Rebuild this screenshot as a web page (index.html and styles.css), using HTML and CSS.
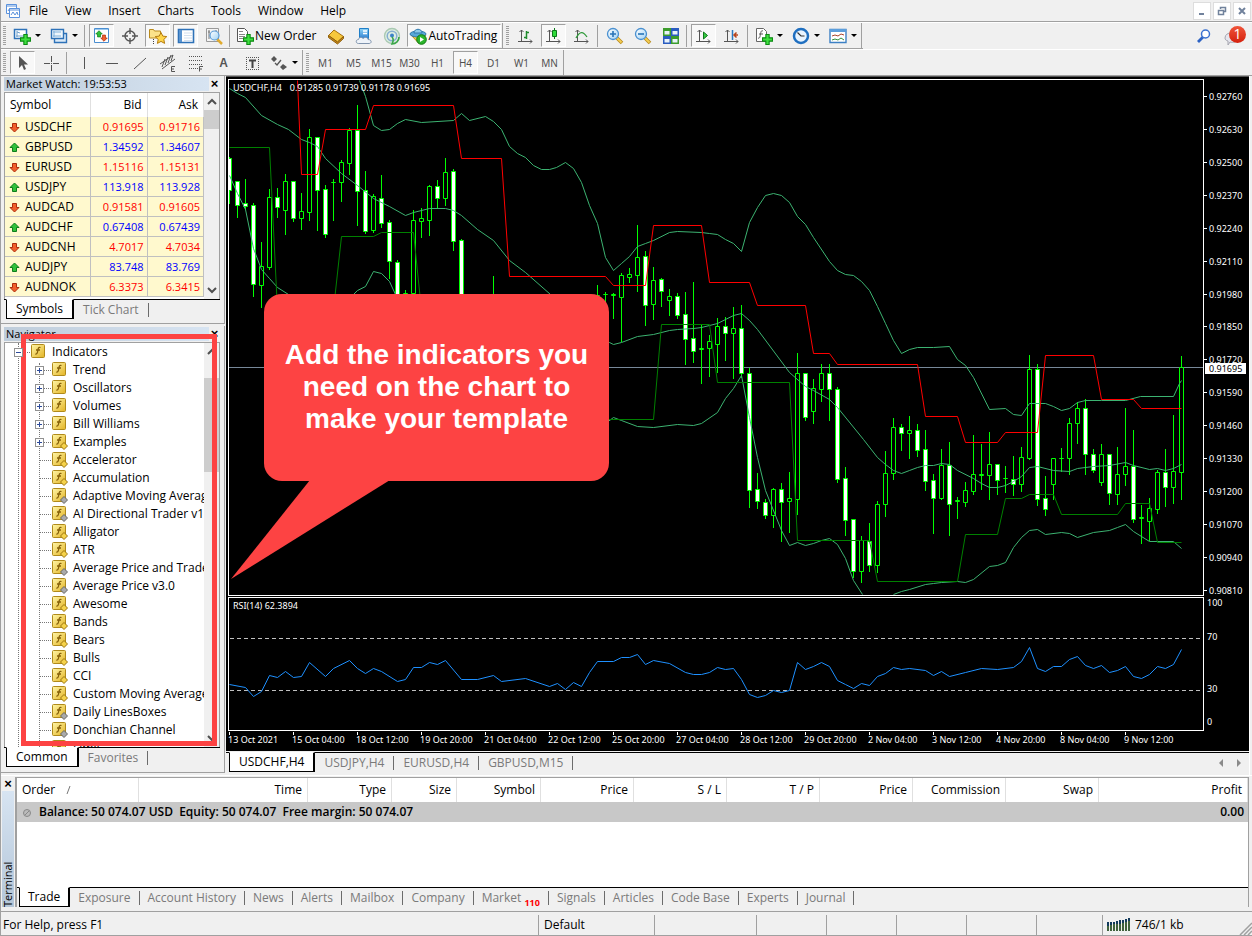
FILE: index.html
```html
<!DOCTYPE html>
<html lang="en">
<head>
<meta charset="utf-8">
<title>USDCHF,H4</title>
<link rel="stylesheet" href="styles.css">
</head>
<body>
<svg class="defs" aria-hidden="true">
  <defs>
    <linearGradient id="gold" x1="0" y1="0" x2="1" y2="1"><stop offset="0" stop-color="#fff6a8"/><stop offset="1" stop-color="#e3b324"/></linearGradient>
    <linearGradient id="blue" x1="0" y1="0" x2="0" y2="1"><stop offset="0" stop-color="#8fd4f7"/><stop offset="1" stop-color="#2f7fd0"/></linearGradient>
    <linearGradient id="lens" x1="0" y1="0" x2="1" y2="1"><stop offset="0" stop-color="#ffffff"/><stop offset="1" stop-color="#9fd2f5"/></linearGradient>
    <linearGradient id="badge" x1="0" y1="0" x2="0" y2="1"><stop offset="0" stop-color="#f0553a"/><stop offset="1" stop-color="#d4200c"/></linearGradient>
  </defs>
  <symbol id="plus" viewBox="0 0 10 10"><path d="M3.5.5h3v3h3v3h-3v3h-3v-3h-3v-3h3z" fill="#3fe03f" stroke="#0c8a14"/></symbol>
  <symbol id="up" viewBox="0 0 11 11"><path d="M5.5 1l4.500 4.500h-2.500v4h-4v-4H1z" fill="#30c23c" stroke="#0e7d1c"/></symbol>
  <symbol id="down" viewBox="0 0 11 11"><path d="M5.500 10L1 5.500h2.500v-4h4v4H10z" fill="#f2602c" stroke="#ad2c0c"/></symbol>
  <symbol id="axes" viewBox="0 0 18 18"><path d="M4.500 3v12M1 14.500h14M2.500 5l2-2 2 2M13 12.500l2 2-2 2" fill="none" stroke="#555"/></symbol>
  <symbol id="glass" viewBox="0 0 18 18"><path d="M11 11l5 5" stroke="#b88a1c" stroke-width="3.500"/><path d="M11 11l4.500 4.500" stroke="#f5cf55" stroke-width="1.800"/><circle cx="7" cy="7" r="5.500" fill="url(#lens)" stroke="#4a90d0" stroke-width="1.300"/></symbol>
  <symbol id="fn" viewBox="0 0 16 16"><rect x=".5" y=".5" width="13" height="13" rx="1" fill="url(#gold)" stroke="#b08a1a"/><path d="M9.500 3.500c-2-.8-2.300.7-2.600 2.500-.3 2-.6 4.600-2.600 4M5 6h4" fill="none" stroke="#86600a" stroke-width="1.300"/></symbol>
</svg>

<div class="app">
  <header class="menubar">
    <svg class="logo" viewBox="0 0 16 16"><g fill="#fff" stroke="#5b92dc"><path d="M1.500 1.500h10v9h-10z"/><path d="M1.500 3h10M3 8l2-3 2 3"/><path d="M4.500 5.500h10v9h-10z"/><path d="M4.500 7h10M6 12l2-3 2 3 2-3 1 3" fill="none"/></g></svg>
    <nav class="menu">
      <button>File</button><button>View</button><button>Insert</button><button>Charts</button><button>Tools</button><button>Window</button><button>Help</button>
    </nav>
    <div class="winctl">
      <button aria-label="Minimize"><svg viewBox="0 0 10 10"><path d="M2 8h5" stroke="#71829c" stroke-width="2"/></svg></button>
      <button aria-label="Restore"><svg viewBox="0 0 10 10"><path d="M3.500 3V1.500h5v4H7M1.500 4.500h5v4h-5zM1 4.500h6M3 1.500h6" fill="none" stroke="#71829c" stroke-width="1.500"/></svg></button>
      <button aria-label="Close"><svg viewBox="0 0 10 10"><path d="M2 2l6 6M8 2L2 8" stroke="#71829c" stroke-width="2"/></svg></button>
    </div>
  </header>

  <div class="toolrow">
    <div class="toolbar">
      <span class="grip"></span>
      <button class="tool drop" aria-label="New chart"><svg viewBox="0 0 18 18"><path d="M1.500 2.500h12v9h-12z" fill="#fff" stroke="#2e72b8" stroke-width="1.500"/><path d="M4 4v6M3 9h8M4 5l3 1" stroke="#6fa0cc"/><use href="#plus" x="7" y="7" width="11" height="11"/></svg></button>
      <button class="tool drop" aria-label="Profiles"><svg viewBox="0 0 18 18"><path d="M4.500 6.500h12v9h-12z" fill="#dcebf8" stroke="#2e72b8" stroke-width="1.400"/><path d="M1.500 2.500h12v9h-12z" fill="#eef6fc" stroke="#2e72b8" stroke-width="1.400"/><path d="M4 4v6M3 9h8M3 5h8" stroke="#7fb0dc"/></svg></button>
      <span class="sep"></span>
      <button class="tool on" aria-label="Market Watch"><svg viewBox="0 0 18 18"><path d="M1.500 1.500h14v14h-14z" fill="#fff" stroke="#4a8ed0"/><path d="M2 2h13v1H2z" fill="#9cc8ee"/><use href="#up" x="2" y="3" width="8" height="8"/><use href="#down" x="7" y="7" width="8" height="8"/></svg></button>
      <button class="tool" aria-label="Data Window"><svg viewBox="0 0 18 18"><circle cx="9" cy="9" r="5" fill="none" stroke="#555" stroke-width="1.400"/><path d="M9 1v6M9 11v6M1 9h6M11 9h6" stroke="#555" stroke-width="1.400"/></svg></button>
      <button class="tool on" aria-label="Navigator"><svg viewBox="0 0 18 18"><path d="M.5 11V2.500h4l1 1.500h6v7z" fill="#fbe28a" stroke="#b98a1c"/><path d="M4.500 12v6" stroke="#444" stroke-dasharray="1 1"/><path d="M12 5.500l1.800 3.600 4 .5-3 2.800.8 4-3.600-2-3.600 2 .8-4-3-2.800 4-.5z" fill="#ffd64a" stroke="#b57c10"/></svg></button>
      <button class="tool on" aria-label="Terminal"><svg viewBox="0 0 18 18"><path d="M1.500 2.500h15v13h-15z" fill="#fff" stroke="#2e72b8" stroke-width="1.600"/><path d="M2 3h3v12H2z" fill="#5a94d0"/><path d="M7 6h8M7 8.500h8M7 11h8M7 13.500h8" stroke="#d3e0ef"/></svg></button>
      <button class="tool" aria-label="Strategy Tester"><svg viewBox="0 0 18 18"><path d="M1.500 1.500h12v13h-12z" fill="#f4f4f4" stroke="#999"/><path d="M4 3v9M3 5h2M11 3v4" stroke="#777"/><path d="M12 12l5 5" stroke="#e0ab30" stroke-width="2.500"/><circle cx="9.500" cy="8.500" r="4.500" fill="url(#lens)" stroke="#5a9bd6" stroke-width="1.200"/></svg></button>
      <span class="sep"></span>
      <button class="tool text"><svg viewBox="0 0 18 18"><path d="M1.500 1.500h7l3 3v10h-10z" fill="#fff" stroke="#555"/><path d="M3 4.500h4M3 7.500h6M3 9.500h6M3 11.500h4" stroke="#888"/><use href="#plus" x="7" y="7" width="11" height="11"/></svg>New Order</button>
      <button class="tool" aria-label="MetaEditor"><svg viewBox="0 0 18 18"><path d="M1.500 8.500L7 3l9.500 6.500-6 5.500z" fill="#f7c83c" stroke="#a8720f"/><path d="M1.500 8.500v2l9 6.500 6-5.500v-2L10.500 15z" fill="#c98a1a" stroke="#8d5e0c"/></svg></button>
      <button class="tool" aria-label="Virtual hosting"><svg viewBox="0 0 18 18"><path d="M4.500 1.500h9v10h-9z" fill="url(#blue)" stroke="#1f7ec8"/><path d="M8 4h4M8 6.500h4" stroke="#fff" stroke-width="1.500"/><path d="M3.500 16.500c-3 0-3-4 0-4 0-2 3-3 4.500-1 2-2 5-1 5 1 4 0 4 4 1 4z" fill="#eef3f9" stroke="#7f93ad"/></svg></button>
      <button class="tool" aria-label="Signals"><svg viewBox="0 0 18 18"><circle cx="9" cy="9" r="7.500" fill="#dfeee2" stroke="#a9c9b2" stroke-width="1.300"/><circle cx="9" cy="9" r="4.800" fill="none" stroke="#86aed0" stroke-width="1.500"/><circle cx="9" cy="8.500" r="2" fill="#3c82c8"/><path d="M9 10c2 2 1 5 0 7 4 0 7-3 7-7" fill="none" stroke="#3aa648" stroke-width="1.600"/></svg></button>
      <button class="tool text on"><svg viewBox="0 0 18 18"><path d="M2 8l8 8.500L17 8z" fill="#f7ce4c" stroke="#b98a1c"/><ellipse cx="9" cy="7" rx="8" ry="3" fill="#58a8d8" stroke="#2f78ac"/><path d="M5 6c0-5 8-5 8 0z" fill="#8ccaea" stroke="#2f78ac"/><circle cx="12.500" cy="12.500" r="4.800" fill="#2cb52c" stroke="#0f7a12"/><path d="M11 10l4 2.500-4 2.500z" fill="#fff"/></svg>AutoTrading</button>
      <span class="edge"></span><span class="grip"></span>
      <button class="tool" aria-label="Bar chart"><svg viewBox="0 0 18 18"><use href="#axes"/><path d="M9.500 12V4M7 10.500h2.500M9.500 5.500H12" stroke="#1f8a2b" stroke-width="1.500"/></svg></button>
      <button class="tool on" aria-label="Candlesticks"><svg viewBox="0 0 18 18"><use href="#axes"/><path d="M9.500 1v11" stroke="#0d7a1a"/><path d="M7.500 3.500h4v6h-4z" fill="#2fdc3a" stroke="#0d7a1a"/></svg></button>
      <button class="tool" aria-label="Line chart"><svg viewBox="0 0 18 18"><use href="#axes"/><path d="M3 11c4-7 7-7 11-1" fill="none" stroke="#2f9a3a" stroke-width="1.300"/></svg></button>
      <span class="sep"></span>
      <button class="tool" aria-label="Zoom in"><svg viewBox="0 0 18 18"><use href="#glass"/><path d="M4 7h6M7 4v6" stroke="#2874b8" stroke-width="1.600"/></svg></button>
      <button class="tool" aria-label="Zoom out"><svg viewBox="0 0 18 18"><use href="#glass"/><path d="M4 7h6" stroke="#2874b8" stroke-width="1.600"/></svg></button>
      <button class="tool" aria-label="Tile windows"><svg viewBox="0 0 18 18"><path d="M1 1h8v8H1zM9 9h8v8H9z" fill="#3c9c2c"/><path d="M9 1h8v8H9zM1 9h8v8H1z" fill="#2a5cc0"/><path d="M2.500 4h5v3.500h-5zM10.500 4h5v3.500h-5zM2.500 12h5v3.500h-5zM10.500 12h5v3.500h-5z" fill="#e8f2fa"/></svg></button>
      <span class="sep"></span>
      <button class="tool on" aria-label="Auto scroll"><svg viewBox="0 0 18 18"><use href="#axes"/><path d="M8.500 5l4 3.500-4 3.500z" fill="#35c940" stroke="#0f7a1c"/></svg></button>
      <button class="tool" aria-label="Chart shift"><svg viewBox="0 0 18 18"><use href="#axes"/><path d="M9.500 3v10" stroke="#2a78c0" stroke-width="1.500"/><path d="M11 8h4M13.500 5.500L11 8l2.500 2.500" fill="none" stroke="#b8451c" stroke-width="1.500"/></svg></button>
      <span class="sep"></span>
      <button class="tool drop" aria-label="Indicators"><svg viewBox="0 0 18 18"><path d="M1.500 1.500h7l3 3v10h-10z" fill="#fff" stroke="#666"/><path d="M8 4c-2-1-2 1-2.500 3S5 12 3 11M4 7h4" fill="none" stroke="#555"/><use href="#plus" x="7" y="7" width="11" height="11"/></svg></button>
      <button class="tool drop" aria-label="Periods"><svg viewBox="0 0 18 18"><circle cx="9" cy="9" r="7" fill="#e8f4ff" stroke="#1f6fc0" stroke-width="2.500"/><path d="M5.500 5.500L9 9h3.500" fill="none" stroke="#333" stroke-width="1.200"/></svg></button>
      <button class="tool drop" aria-label="Templates"><svg viewBox="0 0 18 18"><path d="M1 2.500h16v13H1z" fill="#fff" stroke="#3c80c4" stroke-width="1.400"/><path d="M1 2h16v3H1z" fill="#5b9edc"/><path d="M3 9l3-1 3 1 3-2 3 1" fill="none" stroke="#a8442c"/><path d="M3 13l3-1 3 1 3-2 3 2" fill="none" stroke="#2f8f3c"/></svg></button>
      <span class="edge"></span>
    </div>
    <div class="toolend">
      <button aria-label="Search"><svg viewBox="0 0 18 18"><path d="M8 10l-5 5" stroke="#2c62c4" stroke-width="2.800"/><circle cx="10.500" cy="7" r="4" fill="#fff" stroke="#3a70d0" stroke-width="1.500"/></svg></button>
      <button class="chat" aria-label="Notifications"><svg viewBox="0 0 24 24"><path d="M3 14c0-7 13-7 13 0 0 4-5 5-8 4l-2 3v-4c-2-.5-3-1.500-3-3z" fill="#e6e6ee" stroke="#a6a6b0"/><circle cx="15.500" cy="10.500" r="8.500" fill="url(#badge)"/></svg><span>1</span></button>
    </div>
  </div>

  <div class="toolrow second">
    <div class="toolbar">
      <span class="grip"></span>
      <button class="tool on" aria-label="Cursor"><svg viewBox="0 0 18 18"><path d="M5 2v12l3-3 2 5 2-1-2-4.500h4z" fill="#555"/></svg></button>
      <button class="tool" aria-label="Crosshair"><svg viewBox="0 0 18 18"><path d="M9.500 2v6M9.500 11v6M2 9.500h6M11 9.500h6M9 9.500h1" stroke="#555"/></svg></button>
      <span class="sep"></span>
      <button class="tool" aria-label="Vertical line"><svg viewBox="0 0 18 18"><path d="M9.500 3v12" stroke="#555"/></svg></button>
      <button class="tool" aria-label="Horizontal line"><svg viewBox="0 0 18 18"><path d="M3 9.500h12" stroke="#555"/></svg></button>
      <button class="tool" aria-label="Trendline"><svg viewBox="0 0 18 18"><path d="M3 15L15 4" stroke="#555"/></svg></button>
      <button class="tool" aria-label="Channel"><svg viewBox="0 0 18 18"><path d="M1 10L14 1M3 15L16 5M3 13l3-8M6 11l3-8M9 9l3-8M12 7l2-6" stroke="#555"/><path d="M16 12.500h-3.500v5H16M12.500 15H15" fill="none" stroke="#555"/></svg></button>
      <button class="tool" aria-label="Fibonacci"><svg viewBox="0 0 18 18"><path d="M2 2.500h14M2 6.500h14M2 10.500h14M2 14.500h9" stroke="#555" stroke-dasharray="1 1"/><path d="M16 12.500h-3.500v5M12.500 15H15" fill="none" stroke="#555"/></svg></button>
      <button class="tool letter">A</button>
      <button class="tool letter" aria-label="Text label"><svg viewBox="0 0 18 18"><path d="M3 3.500h13M3 15.500h13M3.500 3v13M15.500 3v13" fill="none" stroke="#555" stroke-dasharray="1 1"/><path d="M6 6.500h7M9.500 6v8" stroke="#444" stroke-width="2"/></svg></button>
      <button class="tool drop" aria-label="Arrows"><svg viewBox="0 0 18 18"><path d="M1 5l3-3 3 3-3 3zM10 13l3-3 4 3-4 3z" fill="#555"/><path d="M5 9l2 2 4-5" fill="none" stroke="#555" stroke-width="1.300"/></svg></button>
      <span class="edge"></span><span class="grip"></span>
      <button class="tool tf">M1</button><button class="tool tf">M5</button><button class="tool tf">M15</button><button class="tool tf">M30</button><button class="tool tf">H1</button><button class="tool tf on">H4</button><button class="tool tf">D1</button><button class="tool tf">W1</button><button class="tool tf">MN</button>
      <span class="edge"></span>
    </div>
  </div>

  <main class="work">
    <aside class="side">
      <section class="dock">
        <h2 class="cap"><span>Market Watch: 19:53:53</span><button aria-label="Close Market Watch">×</button></h2>
        <div class="pane">
          <div class="scrollee">
            <table class="quotes">
              <thead><tr><th>Symbol</th><th>Bid</th><th>Ask</th></tr></thead>
              <tbody id="quotes"></tbody>
            </table>
          </div>
          <div class="sbar"><svg viewBox="0 0 15 10"><path d="M4 7l4-4 4 4" class="chev"/></svg><i class="thumb short"></i><svg viewBox="0 0 15 10" class="end"><path d="M4 3l4 4 4-4" class="chev"/></svg></div>
        </div>
        <div class="tabs"><button class="tab active">Symbols</button><button class="tab">Tick Chart</button></div>
      </section>
      <section class="dock grow">
        <h2 class="cap"><span>Navigator</span><button aria-label="Close Navigator">×</button></h2>
        <div class="pane">
          <div class="scrollee"><ul class="tree" id="tree"></ul></div>
          <div class="sbar"><svg viewBox="0 0 15 10"><path d="M4 7l4-4 4 4" class="chev"/></svg><i class="thumb long"></i><svg viewBox="0 0 15 10" class="end"><path d="M4 3l4 4 4-4" class="chev"/></svg></div>
        </div>
        <div class="tabs"><button class="tab active">Common</button><button class="tab">Favorites</button></div>
      </section>
    </aside>

    <section class="charts">
      <div class="board">
        <div class="plot price">
          <svg id="price" viewBox="229 80 974 515" preserveAspectRatio="none"></svg>
          <p class="legend"><span>USDCHF,H4</span><span>0.91285 0.91739 0.91178 0.91695</span></p>
        </div>
        <div class="scale"><ol id="prices"></ol><span class="now">0.91695</span></div>
        <div class="plot rsi">
          <svg id="rsi" viewBox="229 598 974 132" preserveAspectRatio="none"></svg>
          <p class="legend">RSI(14) 62.3894</p>
        </div>
        <div class="scale levels"><span>100</span><span>70</span><span>30</span><span>0</span></div>
        <ol class="dates" id="dates"></ol>
      </div>
      <div class="tabs chart-tabs"><button class="tab active">USDCHF,H4</button><button class="tab">USDJPY,H4</button><button class="tab">EURUSD,H4</button><button class="tab">GBPUSD,M15</button><span class="arrows"><svg viewBox="0 0 30 10"><path d="M4 1v8L0 5zM18 1v8l4-4z" fill="#8a8a8a"/></svg></span></div>
    </section>
  </main>

  <section class="terminal">
    <div class="strip"><button aria-label="Close Terminal">×</button><h2>Terminal</h2></div>
    <div class="termbody">
      <table class="orders">
        <colgroup><col class="c122"><col class="c169"><col class="c84"><col class="c65"><col class="c84"><col class="c93"><col class="c93"><col class="c93"><col class="c93"><col class="c93"><col class="c93"><col></colgroup>
        <thead><tr><th>Order <svg viewBox="0 0 6 8"><path d="M1 8l3-8" stroke="#777"/></svg></th><th>Time</th><th>Type</th><th>Size</th><th>Symbol</th><th>Price</th><th>S / L</th><th>T / P</th><th>Price</th><th>Commission</th><th>Swap</th><th>Profit</th></tr></thead>
        <tbody><tr><td colspan="11"><svg viewBox="0 0 10 10"><circle cx="5" cy="5" r="3.500" fill="#bbb" stroke="#888"/><path d="M3 7l4-4" stroke="#888"/></svg>Balance: 50 074.07 USD&nbsp; Equity: 50 074.07&nbsp; Free margin: 50 074.07</td><td>0.00</td></tr></tbody>
      </table>
      <div class="tabs term-tabs"><button class="tab active">Trade</button><button class="tab">Exposure</button><button class="tab">Account History</button><button class="tab">News</button><button class="tab">Alerts</button><button class="tab">Mailbox</button><button class="tab">Company</button><button class="tab">Market <b>110</b></button><button class="tab">Signals</button><button class="tab">Articles</button><button class="tab">Code Base</button><button class="tab">Experts</button><button class="tab">Journal</button></div>
    </div>
  </section>

  <footer class="status">
    <span class="help">For Help, press F1</span><span class="s116">Default</span><span class="s102"></span><span class="s70"></span><span class="s70"></span><span class="s70"></span><span class="s70"></span><span class="s66"></span>
    <span class="net"><svg viewBox="0 0 26 13"><path d="M1 4v9M4 4v9M7 4v9M10 3v10M13 2v11M16 2v11M19 1v12M22 0v13" stroke="#123a5c" stroke-width="2"/><path d="M1 8v5M4 7v6M7 6v7M10 6v7M13 6v7M16 5v8M19 4v9M22 3v10" stroke="#6f8a1f" stroke-width="1"/></svg>746/1 kb</span>
    <svg class="sizer" viewBox="0 0 14 14"><path d="M14 2L2 14M14 6l-8 8M14 10l-4 4" stroke="#a0a0a0" stroke-width="1.500"/></svg>
  </footer>

  <div class="marker"></div>
  <div class="callout">
    <p>Add the indicators you need on the chart to make your template</p>
    <svg viewBox="0 0 160 100"><path d="M80 0h80L1 99z" fill="#fd4343"/></svg>
  </div>
</div>
<script src="app.js"></script>
</body>
</html>
```

FILE: styles.css
```css
* { box-sizing: border-box; }
body { margin: 0; background: #f0f0f0; color: #000; font: 12px/16px "Open Sans", "Noto Sans", sans-serif; }
button { margin: 0; padding: 0; border: 0; background: none; color: inherit; font: inherit; }
h2, p, ul, ol { margin: 0; padding: 0; list-style: none; }
h2 { font-size: 11px; font-weight: 400; }
svg { display: block; flex: none; }
.defs { position: absolute; width: 0; height: 0; }

.app { position: relative; display: grid; grid-template-rows: 22px 27px 27px minmax(0, 1fr) 136px 25px; height: 100vh; min-height: 600px; min-width: 1000px; border-left: 1px solid #a0a0a0; overflow: hidden; }

/* menu */
.menubar { display: flex; align-items: center; border-bottom: 1px solid #a0a0a0; }
.logo { width: 16px; height: 16px; margin-left: 4px; }
.menu { display: flex; gap: 17px; flex: 1; padding-left: 8px; }
.winctl { display: flex; gap: 2px; padding-right: 1px; }
.winctl button { display: grid; place-items: center; width: 18px; height: 18px; background: #fff; border: 1px solid #ddd; }
.winctl svg { width: 10px; height: 10px; }

/* toolbars */
.toolrow { display: flex; justify-content: space-between; border-top: 1px solid #fff; }
.toolbar { display: flex; align-items: center; border-bottom: 1px solid #a0a0a0; }
.second { border-bottom: 1px solid #a0a0a0; }
.second .toolbar { border-bottom: 0; }
.grip { width: 3px; height: 19px; margin: 0 2px 0 2px; background: repeating-linear-gradient(#a0a0a0 0 1px, #f0f0f0 1px 2px); }
.sep { width: 1px; height: 22px; margin: 0 2px; background: #a0a0a0; }
.edge { width: 1px; align-self: stretch; background: #a0a0a0; margin-right: 1px; }
.tool { display: flex; align-items: center; justify-content: center; width: 25px; height: 23px; margin: 0 1px 0 2px; border: 1px solid transparent; }
.tool svg { width: 18px; height: 18px; }
.tool.on { background: #f8f8f8; border-color: #a0a0a0 #fff #fff #a0a0a0; }
.tool.drop { width: 34px; gap: 4px; }
.tool.drop::after { content: ""; border: 3px solid transparent; border-top-color: #000; border-bottom: 0; }
.tool.text { width: auto; padding: 0 3px 0 1px; gap: 1px; }
.tool.letter { color: #555; font: bold 12px/16px "Liberation Sans", sans-serif; }
.tool.tf { color: #505050; font: 10px/16px "Noto Sans", sans-serif; }
.toolend { display: flex; align-items: center; gap: 9px; padding-right: 6px; }
.toolend svg { width: 18px; height: 18px; }
.chat { position: relative; }
.toolend .chat svg { width: 24px; height: 24px; }
.chat span { position: absolute; left: 8px; top: 2px; width: 15px; text-align: center; color: #fff; font-size: 14px; }

/* work area */
.work { display: grid; grid-template-columns: 224px minmax(0, 1fr); min-height: 0; }
.side { display: flex; flex-direction: column; gap: 2px; min-height: 0; padding-bottom: 2px; }
.dock { display: flex; flex-direction: column; height: 248px; padding: 0 4px 4px 3px; border-right: 1px solid #a0a0a0; border-bottom: 1px solid #a0a0a0; min-height: 0; }
.dock.grow { flex: 1; height: auto; padding-bottom: 5px; }
.cap { display: flex; justify-content: space-between; align-items: center; height: 16px; flex: none; }
.cap span { flex: 1; height: 14px; line-height: 14px; padding-left: 2px; background: linear-gradient(90deg, #bfcddb, #d7e4f2); }
.cap button { width: 11px; font: bold 13px/14px "Liberation Sans", sans-serif; }
.pane { display: flex; flex: 1; min-height: 0; background: #fff; border: 1px solid #a0a0a0; border-bottom: 0; }
.scrollee { flex: 1; overflow: hidden; min-width: 0; }
.sbar { display: flex; flex-direction: column; width: 15px; padding: 4px 0; background: #f0f0f0; }
.sbar svg { width: 15px; height: 10px; }
.sbar .end { margin-top: auto; }
.chev { fill: none; stroke: #505050; stroke-width: 2; }
.thumb { background: #cdcdcd; }
.thumb.short { height: 19px; margin-top: 3px; }
.thumb.long { height: 94px; margin-top: 21px; }
.quotes { width: 100%; border-collapse: separate; border-spacing: 0; table-layout: fixed; }
.quotes th { height: 24px; padding: 0 5px; font-weight: 400; text-align: right; background: #fff; border: 0 solid #e0e0e0; border-right-width: 1px; }
.quotes th:first-child { width: 86px; text-align: left; }
.quotes td { height: 20px; padding: 0 3px 0 4px; font-size: 11px; line-height: 16px; text-align: right; background: #fff9ce; border: 0 solid #c0c0c0; border-width: 0 1px 1px 0; }
.quotes td:first-child { color: #000; font-size: 12px; text-align: left; }
.quotes td svg { display: inline-block; width: 11px; height: 11px; margin-right: 5px; vertical-align: -2px; }
.rise { color: #00f; }
.fall { color: #f00; }

.tree { position: relative; }
.tree::before, .tree::after { content: ""; position: absolute; top: 0; bottom: 0; left: 13px; border-left: 1px dotted #777; }
.tree::after { left: 34px; top: 20px; }
.tree li { display: flex; align-items: center; height: 18px; padding-left: 30px; white-space: nowrap; }
.tree li:first-child { padding-left: 9px; }
.tree span { flex: none; }
.tree .box { position: relative; z-index: 1; width: 9px; height: 9px; border: 1px solid #919191; background: #fff; }
.tree .box svg { width: 7px; height: 7px; }
.tree .dots { width: 7px; margin-right: 1px; border-top: 1px dotted #777; }
.tree .none { width: 5px; }
.tree .none + .dots { width: 11px; }
.tree .ico { width: 16px; height: 16px; margin-right: 5px; }

/* tab strips */
.tabs { display: flex; align-items: center; flex: none; height: 20px; padding-left: 2px; border-top: 1px solid #000; color: #7a7a7a; }
.tab { padding: 0 9px; height: 14px; line-height: 14px; border-right: 1px solid #6c6c6c; white-space: nowrap; }
.tab.active { align-self: flex-start; height: 20px; margin-top: -1px; line-height: 18px; background: #fff; color: #000; border: 1px solid #000; border-top-color: #fff; border-right-width: 2px; }
.tab b { color: #f00; font: bold 9px/9px "Open Sans", sans-serif; vertical-align: -4px; }

/* chart */
.charts { display: flex; flex-direction: column; margin: 0 2px 0 1px; min-width: 0; min-height: 0; border-right: 1px solid #fff; }
.board { display: grid; flex: 1; grid-template: minmax(0, 1fr) 134px 19px / minmax(0, 1fr) 45px; row-gap: 1px; min-height: 0; padding: 2px 0 0 2px; background: #000; border-top: 1px solid #555; color: #fff; font: 9px/12px "Noto Sans", sans-serif; }
.plot { position: relative; border: 1px solid #fff; min-height: 0; }
.plot svg { width: 100%; height: 100%; }
.plot path { vector-effect: non-scaling-stroke; }
.legend { position: absolute; left: 4px; top: 2px; display: flex; gap: 8px; white-space: nowrap; }
.scale { position: relative; min-height: 0; }
.scale ol { display: flex; flex-direction: column; justify-content: space-between; height: 100%; padding-top: 13px; }
.scale li { line-height: 10px; }
.scale li::before { content: ""; display: inline-block; width: 3px; height: 1px; margin-right: 2px; background: #fff; vertical-align: 3px; }
.now { position: absolute; top: 55%; left: 1px; width: 41px; line-height: 11px; padding-left: 4px; background: #fff; color: #000; }
.levels { display: grid; grid-template-rows: 34px 52px 33px 12px; padding-left: 3px; }
.dates { display: flex; grid-column: 1 / -1; overflow: hidden; }
.dates li { flex: 0 0 64px; width: 64px; padding-top: 2px; white-space: nowrap; }
.dates li::before { content: ""; position: absolute; width: 1px; height: 3px; margin: -2px 0 0 1px; background: #fff; }
.chart-tabs { height: 20px; margin-top: 1px; margin-bottom: 3px; padding-left: 3px; }
.arrows { margin-left: auto; }
.arrows svg { width: 30px; height: 10px; }

/* terminal */
.terminal { display: grid; grid-template-columns: 14px minmax(0, 1fr); padding: 1px 3px 4px 0; border-top: 1px solid #fff; }
.strip { display: flex; flex-direction: column; align-items: center; }
.strip button { height: 14px; font: bold 13px/14px "Liberation Sans", sans-serif; }
.strip h2 { flex: 1; width: 12px; line-height: 12px; writing-mode: vertical-rl; transform: rotate(180deg); text-align: left; background: linear-gradient(#b4c6d8, #d7e4f2); }
.termbody { display: flex; flex-direction: column; justify-content: space-between; background: #fff; border: 1px solid #a0a0a0; border-width: 1px 1px 0 2px; }
.orders { width: 100%; border-collapse: separate; border-spacing: 0; table-layout: fixed; }
.orders th { height: 24px; padding: 0 5px; font-weight: 400; text-align: right; border-right: 1px solid #e0e0e0; }
.orders th:first-child { text-align: left; }
.orders th svg { display: inline-block; width: 6px; height: 8px; margin-left: 8px; }
.orders td { height: 20px; padding: 0 4px; font-weight: 600; background: #c8c8c8; }
.orders td svg { display: inline-block; width: 10px; height: 10px; margin: 0 7px 0 1px; vertical-align: -2px; }
.orders td:last-child { text-align: right; }
.c122 { width: 122px; } .c169 { width: 169px; } .c84 { width: 84px; } .c65 { width: 65px; } .c93 { width: 93px; }
.term-tabs { background: #f0f0f0; }
.term-tabs .tab { padding: 0 8px; }

/* status bar */
.status { display: flex; align-items: center; padding-top: 2px; border-top: 1px solid #a0a0a0; border-bottom: 1px solid #a0a0a0; }
.status span { height: 20px; line-height: 20px; padding-left: 5px; border-left: 1px solid #a0a0a0; }
.status .help { flex: 1; padding-left: 2px; border: 0; }
.s116 { width: 116px; } .s102 { width: 102px; } .s70 { width: 70px; } .s66 { width: 66px; }
.status .net { display: flex; align-items: center; gap: 2px; width: 136px; padding-left: 4px; }
.net svg { width: 26px; height: 13px; }
.sizer { align-self: flex-end; width: 14px; height: 14px; }

/* annotation laid over the window */
.marker { position: absolute; left: 20px; top: 334px; width: 196px; height: 412px; border: 5px solid #fd4343; }
.callout { position: absolute; left: 263px; top: 294px; width: 345px; height: 187px; padding: 45px 16px; border-radius: 18px; background: #fd4343; color: #fff; text-align: center; font: bold 28px/32px "Liberation Sans", Arial, sans-serif; }
.callout svg { position: absolute; left: -34px; top: 186px; width: 160px; height: 100px; }
```

FILE: app.js
```js
const el = (id) => document.getElementById(id);

const quotes = [
  ["USDCHF", "0.91695", "0.91716", 0], ["GBPUSD", "1.34592", "1.34607", 1], ["EURUSD", "1.15116", "1.15131", 0],
  ["USDJPY", "113.918", "113.928", 1], ["AUDCAD", "0.91581", "0.91605", 0], ["AUDCHF", "0.67408", "0.67439", 1],
  ["AUDCNH", "4.7017", "4.7034", 0], ["AUDJPY", "83.748", "83.769", 1], ["AUDNOK", "6.3373", "6.3415", 0]
];
el("quotes").innerHTML = quotes.map(([s, b, a, up]) =>
  `<tr class="${up ? "rise" : "fall"}"><td><svg><use href="#${up ? "up" : "down"}"/></svg>${s}</td><td>${b}</td><td>${a}</td></tr>`).join("");

/* kind: r = root, g = group, e = group with badge, y = built-in, k = custom */
const tree = [
  ["Indicators", "r"], ["Trend", "g"], ["Oscillators", "g"], ["Volumes", "g"], ["Bill Williams", "g"], ["Examples", "e"],
  ["Accelerator", "y"], ["Accumulation", "y"], ["Adaptive Moving Average", "k"], ["AI Directional Trader v1.0", "k"],
  ["Alligator", "y"], ["ATR", "y"], ["Average Price and Trade", "k"], ["Average Price v3.0", "k"], ["Awesome", "y"],
  ["Bands", "y"], ["Bears", "y"], ["Bulls", "y"], ["CCI", "y"], ["Custom Moving Average", "y"], ["Daily LinesBoxes", "k"],
  ["Donchian Channel", "k"], ["Limit", "k"]
];
el("tree").innerHTML = tree.map(([name, kind]) => {
  const box = "rge".includes(kind)
    ? `<span class="box"><svg viewBox="0 0 7 7"><path d="M1 3.500h5${kind === "r" ? "" : "M3.500 1v5"}" stroke="#2c4a9a"/></svg></span>`
    : `<span class="none"></span>`;
  const gem = "eyk".includes(kind)
    ? `<path d="M12 8.500l3.500 3.500-3.500 3.500L8.500 12z" fill="${kind === "k" ? "#aaa" : "#f5d24a"}" stroke="${kind === "k" ? "#666" : "#9a7410"}"/>` : "";
  return `<li>${box}<span class="dots"></span><svg class="ico" viewBox="0 0 16 16"><use href="#fn" width="16" height="16"/>${gem}</svg>${name}</li>`;
}).join("");

/* candles: slot, body top, body bottom, high, low, filled */
const candles = [
[0,158,190,157,203,1],[1,181,205,181,217,1],[2,203,206,179,209,1],[3,205,284,203,296,1],[4,266,285,242,307,0],[5,197,267,189,269,0],
[6,197,207,188,217,1],[7,181,210,174,234,0],[8,181,218,181,221,1],[9,211,218,193,229,0],[10,137,212,129,220,0],[11,137,190,137,230,1],
[12,189,234,185,237,1],[13,182,182,179,220,0],[14,162,182,160,201,0],[15,130,163,128,174,0],[16,130,191,105,225,1],[17,190,231,171,233,1],
[18,196,230,194,232,0],[19,198,223,175,227,1],[20,222,261,220,278,1],[21,262,300,260,310,1],[22,293,300,290,305,0],[23,220,293,210,300,0],
[24,218,221,208,237,0],[25,186,220,185,235,0],[26,186,198,180,208,1],[27,172,198,158,205,0],[28,171,241,169,250,1],[29,240,300,239,310,1],
[33,300,310,276,320,0],[46,295,295,285,305,0],[47,294,294,292,305,0],[48,294,295,293,318,0],[49,275,297,273,341,0],[50,274,277,268,282,0],
[51,257,275,225,291,0],[52,256,305,251,325,1],[53,280,304,267,319,0],[54,279,291,278,306,1],[55,296,300,289,315,0],[56,296,315,293,318,1],
[57,314,339,292,364,1],[58,338,351,282,362,1],[59,348,349,325,383,0],[60,341,348,335,376,0],[61,326,344,318,372,0],[62,326,333,317,360,1],
[63,328,333,307,378,0],[64,328,373,305,377,1],[65,373,490,368,507,1],[66,489,501,473,508,1],[67,502,515,499,518,1],[68,489,515,488,527,0],
[69,489,502,483,541,1],[70,498,501,472,532,0],[71,373,499,353,514,0],[72,373,417,373,420,1],[73,388,411,379,423,0],[74,373,389,364,401,0],
[75,373,389,364,420,1],[76,389,479,387,482,1],[77,478,520,467,535,1],[78,519,571,519,577,1],[79,540,571,536,582,0],[80,541,565,523,571,1],
[81,504,565,501,572,0],[82,473,504,451,516,0],[83,427,473,418,479,0],[84,427,433,424,450,1],[85,430,433,416,458,0],[86,430,450,424,456,1],
[87,449,481,430,490,1],[88,480,498,474,533,1],[89,465,498,449,499,0],[90,465,504,442,535,1],[91,500,501,497,518,0],[92,490,502,482,506,0],
[93,474,491,435,494,0],[94,474,475,444,489,0],[95,464,475,432,499,0],[96,464,480,464,494,1],[97,478,478,466,492,0],[98,479,484,456,495,1],
[99,457,484,447,491,0],[100,369,458,355,459,0],[101,369,499,364,505,1],[102,498,509,476,515,1],[103,458,484,458,499,0],[104,458,458,448,471,0],
[105,423,458,418,474,0],[106,408,423,402,443,0],[107,408,454,399,474,1],[108,454,470,449,472,1],[109,454,482,444,485,0],[110,454,493,454,504,1],
[111,474,494,447,504,0],[112,466,474,408,485,0],[113,466,519,430,522,1],[114,517,518,505,543,0],[115,508,521,498,540,0],[116,472,509,470,513,0],
[117,472,487,449,506,1],[118,471,487,415,503,0],[119,367,472,356,499,0]];

const series = {
  "#3cb371": [
    "229,88 237,93 245,97 261,115 277,124 288,129 301,139 309,142 317,146 325,158 341,173 357,185 373,198 389,206 405,215 413,212 429,208 445,208 453,210 461,215 477,229 493,240 509,260 525,272 550,294 580,320 609,342 613,344 621,342 637,336 653,334 669,330 677,329 693,328 701,327 717,323 733,315 741,313 749,320 757,329 789,372 805,386 813,390 829,399 837,407 863,439 877,457 885,464 893,470 901,473 909,470 917,467 925,465 933,465 941,463 949,464 957,470 973,478 981,483 989,487 997,487 1005,485 1013,481 1021,476 1029,467 1037,466 1053,470 1069,471 1077,468 1093,466 1109,465 1125,462 1133,465 1149,469 1157,468 1165,470 1173,468 1181,464",
    "359,80 365,96 373,125 381,130 389,129 397,123 405,119 421,122 453,120 461,113 469,120 485,116 493,121 501,129 509,146 517,153 525,157 533,165 541,169 549,169 556,167 565,162 573,168 581,182 589,205 597,223 605,257 613,270 621,263 629,256 637,246 645,243 653,240 669,232 677,231 701,232 709,233 717,234 725,239 733,243 741,251 749,222 757,207 765,195 773,193 781,195 789,202 797,216 805,224 813,237 829,261 837,270 845,274 853,275 861,281 869,290 877,306 885,323 893,340 901,353 909,349 917,347 933,347 949,346 957,359 965,365 973,377 989,409 1005,408 1013,414 1021,415 1029,403 1045,403 1053,406 1061,410 1069,408 1077,402 1085,400 1101,400 1125,400 1140,396 1173,396 1179,383 1181,380",
    "229,175 237,193 245,209 253,248 261,269 269,278 277,287 288,294",
    "353,294 357,290 365,286 373,271 381,273 389,281 395,294",
    "605,423 613,417 621,420 637,426 653,427 677,424 693,425 701,423 717,412 725,398 733,388 741,375 749,417 757,457 765,490 781,530 789,545 797,542 805,545 813,543 821,540 829,538 837,544 845,558 853,580 862,594",
    "893,594 901,591 909,589 925,584 933,583 941,582 957,581 965,582 973,579 989,566 997,565 1005,562 1013,547 1021,537 1029,530 1037,529 1045,534 1061,532 1069,533 1077,537 1093,532 1109,530 1117,527 1125,524 1133,531 1149,541 1173,541 1181,548"],
  "#ff0000": ["297,80 301,174 317,174 325,129 365,129 373,105 453,105 461,158 501,158 509,276 605,276 613,285 645,285 653,225 701,225 709,282 749,282 757,305 805,305 813,353 829,353 837,364 917,364 925,416 957,416 965,442 997,442 1005,432 1037,432 1045,355 1093,355 1101,399 1133,399 1141,408 1181,408"],
  "#008000": ["229,147 269,147 277,310", "334,300 341,236 373,236 381,232 413,232 421,310", "605,419 653,419 661,324 709,324 717,382 789,382 797,540 869,540 877,581 957,581 965,534 997,534 1005,498 1021,498 1029,494 1053,494 1061,514 1117,514 1125,503 1149,503 1157,542 1181,542"]
};
const half = (pts) => "M" + pts.replace(/(\d+),(\d+)/g, (m, x, y) => `${+x + 0.5} ${+y + 0.5}`);
let art = `<path d="M229 367.500h974" stroke="#778899"/>`;
for (const [k, t, b, h, l, full] of candles) {
  const x = 229.5 + 8 * k;
  art += `<path d="M${x} ${h}V${l + 1}" stroke="#00ff00"/><path d="M${x - 2} ${t + 0.5}h4V${b + 0.5}h-4z" fill="${full ? "#fff" : "#000"}" stroke="#00ff00"/>`;
}
for (const color in series) for (const s of series[color]) art += `<path d="${half(s)}" fill="none" stroke="${color}"/>`;
el("price").innerHTML = art;

const rsi = "229,684 245,687 253,696 261,691 269,675 277,677 285,671 293,677 301,676 309,662 325,676 333,668 349,660 357,668 365,673 373,668 381,671 397,681 405,679 413,667 421,667 429,662 437,664 445,660 461,679 477,679 493,675 501,681 525,678 549,686 557,683 565,689 573,682 581,686 589,672 597,661 613,661 621,657 629,657 637,654 645,664 653,660 669,663 685,672 693,674 701,674 709,672 717,667 725,669 733,668 741,679 749,694 757,697 765,695 773,690 781,692 789,690 797,662 805,669 813,666 821,662 829,666 837,680 845,684 853,688 861,683 869,685 877,676 885,673 893,667 901,669 909,668 925,670 933,675 941,671 949,676 965,672 981,668 997,669 1013,667 1021,661 1029,647 1037,668 1045,671 1053,666 1061,666 1069,659 1077,656 1085,665 1093,668 1101,665 1109,672 1117,670 1125,666 1133,676 1141,678 1149,674 1157,666 1165,668 1173,664 1181,649";
el("rsi").innerHTML = `<path d="M230 638.500h973M230 690.500h973" stroke="#c0c0c0" stroke-dasharray="4 3"/><path d="${half(rsi)}" fill="none" stroke="#1e90ff"/>`;

el("prices").innerHTML = ["0.92760","0.92630","0.92500","0.92370","0.92240","0.92110","0.91980","0.91850","0.91720","0.91590","0.91460","0.91330","0.91200","0.91070","0.90940","0.90810"].map((p) => `<li>${p}</li>`).join("");
el("dates").innerHTML = ["13 Oct 2021","15 Oct 04:00","18 Oct 12:00","19 Oct 20:00","21 Oct 04:00","22 Oct 12:00","25 Oct 20:00","27 Oct 04:00","28 Oct 12:00","29 Oct 20:00","2 Nov 04:00","3 Nov 12:00","4 Nov 20:00","8 Nov 04:00","9 Nov 12:00"].map((d) => `<li>${d}</li>`).join("");
```
